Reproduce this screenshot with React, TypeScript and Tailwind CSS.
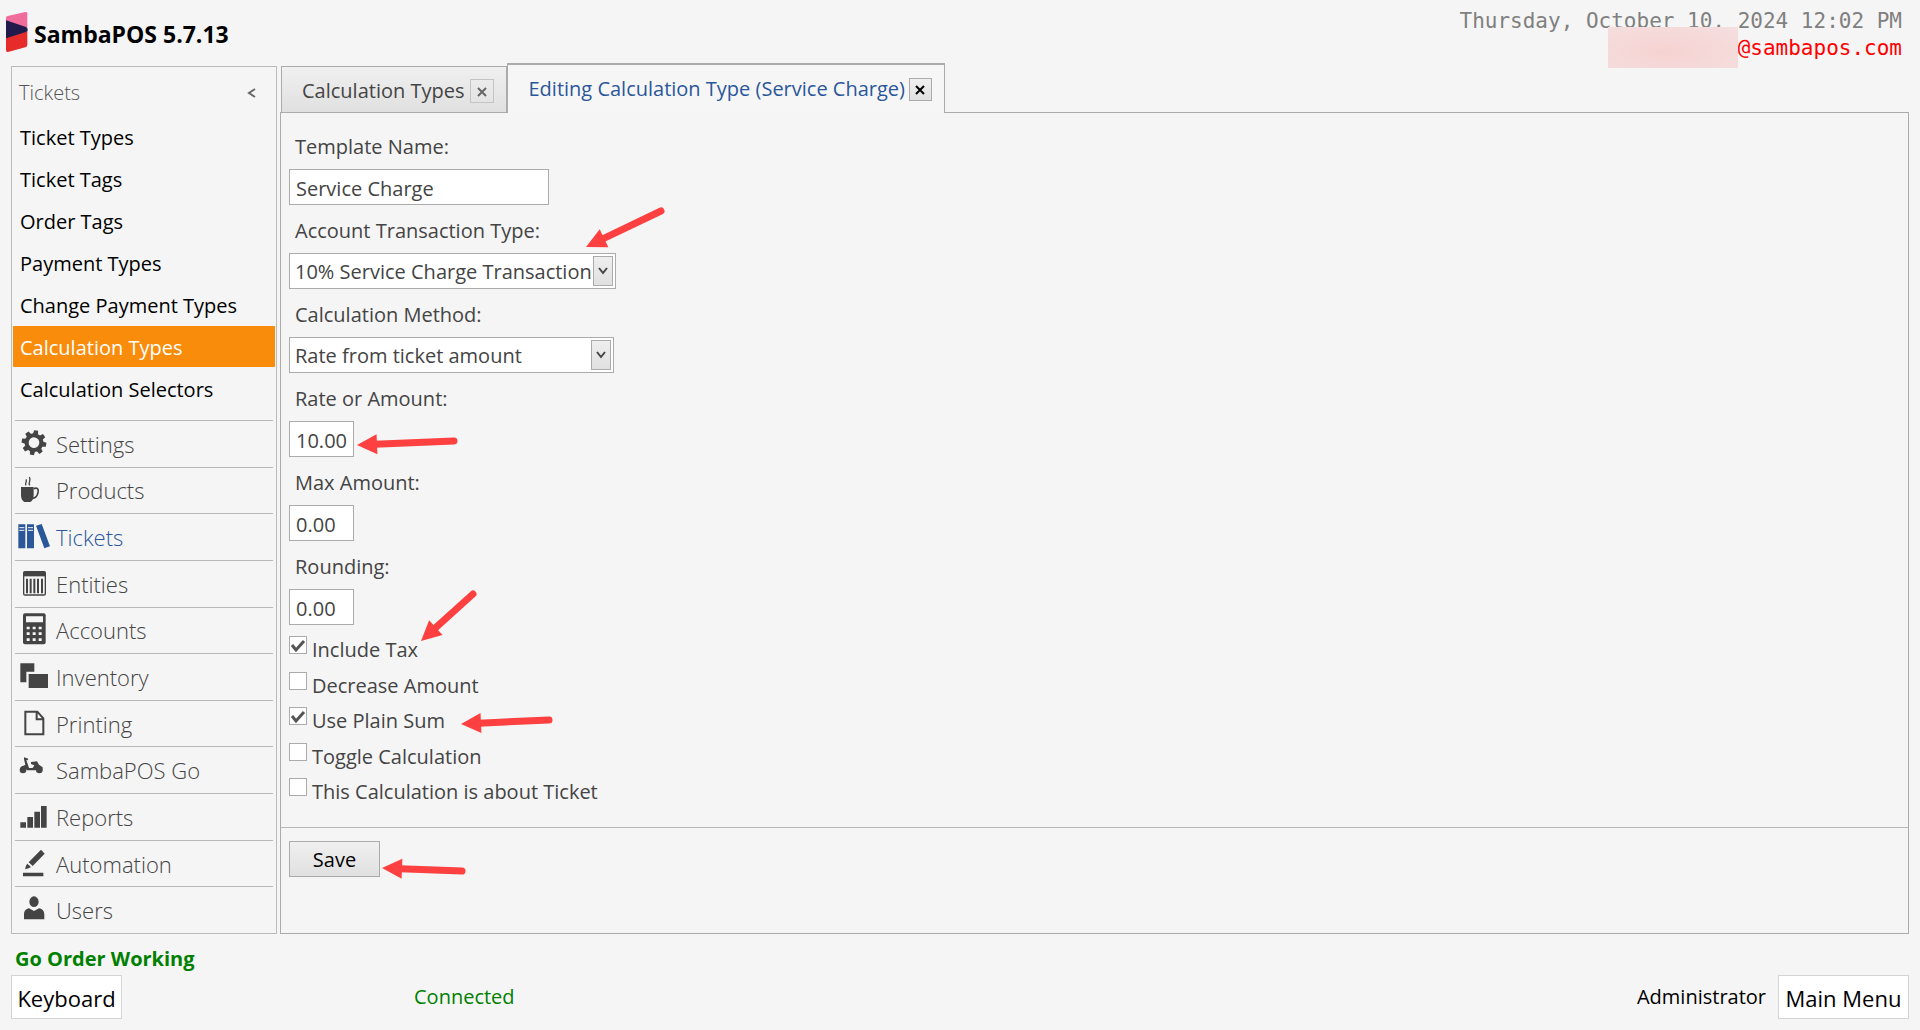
import { ReactNode } from 'react';

const ticketLinks = [
  'Ticket Types',
  'Ticket Tags',
  'Order Tags',
  'Payment Types',
  'Change Payment Types',
  'Calculation Types',
  'Calculation Selectors',
];

const gearTeeth = [0, 45, 90, 135, 180, 225, 270, 315];

const icons: Record<string, ReactNode> = {
  Settings: (
    <g transform="rotate(10 57 62)">
      <circle cx="57" cy="62" r="22" fill="none" stroke="currentColor" strokeWidth="12" />
      {gearTeeth.map((deg) => (
        <path key={deg} d="M49 38 L51 25 H63 L65 38 Z" transform={`rotate(${deg} 57 62)`} />
      ))}
    </g>
  ),
  Products: (
    <>
      <path d="M18 57 H56 V80 C56 92 52 98 46 102 H28 C21 97 18 91 18 80 Z" />
      <path d="M56 62 C66 57 72 63 69 74 C67 84 60 90 53 91" fill="none" stroke="currentColor" strokeWidth="5" />
      <path d="M33 52 C28 45 38 42 33 34 M44 52 C38 42 50 38 43 27" fill="none" stroke="currentColor" strokeWidth="4" />
    </>
  ),
  Tickets: (
    <>
      <path d="M10 28 H31 V100 H10 Z M36 28 H57 V100 H36 Z M63 32 L80 27 L105 94 L88 100 Z" />
      <path d="M13 38 H28 M13 46 H28 M39 38 H54 M39 46 H54" stroke="#f5f5f5" strokeWidth="3" />
    </>
  ),
  Entities: (
    <>
      <rect x="26" y="29" width="65" height="70" rx="4" fill="none" stroke="currentColor" strokeWidth="4" />
      <path d="M26 29 H91 V43 H26 Z" />
      <path d="M36 50 V94 M47 50 V94 M58 50 V94 M69 50 V94 M81 50 V94" stroke="currentColor" strokeWidth="6" />
    </>
  ),
  Accounts: (
    <>
      <rect x="24" y="16" width="68" height="93" rx="6" />
      <path
        d="M33 25 H84 V43 H33 Z M35 56 h9 v8 h-9 Z M53 56 h9 v8 h-9 Z M71 56 h9 v8 h-9 Z M35 73 h9 v8 h-9 Z M53 73 h9 v8 h-9 Z M71 73 h9 v8 h-9 Z M35 91 h9 v8 h-9 Z M53 91 h9 v8 h-9 Z M71 91 h9 v8 h-9 Z"
        fill="#f5f5f5"
      />
    </>
  ),
  Inventory: <path d="M16 25 H58 V50 H34 V82 H16 Z M41 57 H99 V99 H41 Z" />,
  Printing: (
    <path d="M31 29 H67 L85 49 V97 H31 Z M65 29 V52 H85" fill="none" stroke="currentColor" strokeWidth="6" />
  ),
  'SambaPOS Go': (
    <>
      <circle cx="24" cy="66" r="10" />
      <circle cx="73" cy="66" r="10" />
      <path d="M27 28 L40 32 L38 37 L34 36 L42 60 H53 L58 52 L48 48 V42 L66 40 L72 50 L83 58 L82 67 H36 L30 59 L15 66 C15 57 20 53 26 53 L31 50 L27 34 Z" />
    </>
  ),
  Reports: <path d="M16 82 h17 v16 h-17 Z M37 66 h17 v32 h-17 Z M58 50 h17 v48 h-17 Z M78 33 h17 v65 h-17 Z" />,
  Automation: <path d="M78 23 L89 35 L53 72 L41 61 Z M37 65 L48 75 L41 79 L30 82 L33 71 Z M24 92 H85 V103 H24 Z" />,
  Users: (
    <>
      <ellipse cx="57" cy="41" rx="14" ry="16" />
      <path d="M27 94 V80 C27 68 33 63 42 61 L57 69 L72 61 C82 63 88 68 88 80 V94 Z" />
    </>
  ),
};

const textFields = [
  { id: 'rate', label: 'Rate or Amount:', value: '10.00' },
  { id: 'max', label: 'Max Amount:', value: '0.00' },
  { id: 'rounding', label: 'Rounding:', value: '0.00' },
];

const options = [
  { id: 'tax', label: 'Include Tax', checked: true },
  { id: 'decrease', label: 'Decrease Amount', checked: false },
  { id: 'plain', label: 'Use Plain Sum', checked: true },
  { id: 'toggle', label: 'Toggle Calculation', checked: false },
  { id: 'about', label: 'This Calculation is about Ticket', checked: false },
];

// tip and tail of each callout arrow, in panel coordinates
const arrows = [
  { tip: [305, 134], tail: [380, 98] },
  { tip: [76, 332], tail: [173, 328] },
  { tip: [140, 528], tail: [192, 481] },
  { tip: [180, 611], tail: [268, 607] },
  { tip: [101, 755], tail: [181, 758] },
];

const Arrow = ({ tip, tail }: { tip: number[]; tail: number[] }) => {
  const dx = tail[0] - tip[0];
  const dy = tail[1] - tip[1];
  const angle = (Math.atan2(dy, dx) * 180) / Math.PI;
  return (
    <g transform={`translate(${tip[0]} ${tip[1]}) rotate(${angle})`}>
      <path d="M0 0 L20 -10 V10 Z" fill="#ff4040" />
      <path d={`M18 0 H${Math.hypot(dx, dy)}`} stroke="#ff4040" strokeWidth="7" strokeLinecap="round" />
    </g>
  );
};

const Cross = () => (
  <svg viewBox="0 0 10 10" className="mt-[2px] size-[10px]" fill="none" stroke="currentColor" strokeWidth="2">
    <path d="M1 1 L9 9 M9 1 L1 9" />
  </svg>
);

const Field = ({ id, label, children }: { id: string; label: string; children: ReactNode }) => (
  <div className="flex flex-col items-start">
    <label htmlFor={id} className="flex h-12 items-center pl-[6px] pt-1">
      {label}
    </label>
    {children}
  </div>
);

const Select = ({ id, value, width }: { id: string; value: string; width: string }) => (
  <div className={`relative ${width}`}>
    <select
      id={id}
      className="h-9 w-full appearance-none rounded-none border border-[#ababab] bg-white pl-[5px] pt-[2px] outline-none"
    >
      <option>{value}</option>
    </select>
    <span className="pointer-events-none absolute inset-y-[3px] right-[3px] flex w-5 items-center justify-center border border-[#ababab] bg-gradient-to-b from-[#eeeeee] to-[#e0e0e0]">
      <svg viewBox="0 0 10 8" className="h-2 w-[10px]" fill="none" stroke="#444444" strokeWidth="2">
        <path d="M1 1 L5 6 L9 1" />
      </svg>
    </span>
  </div>
);

const Sidebar = () => (
  <aside className="flex w-[266px] flex-none flex-col border border-[#bcbcbc]">
    <div className="flex h-[49px] items-center justify-between pl-[7px] pr-5 pt-[2px] text-[#555555]">
      <h2 className="font-light">Tickets</h2>
      <button aria-label="Collapse">
        <svg viewBox="0 0 9 10" className="h-[10px] w-[9px]" fill="none" stroke="#666666" strokeWidth="2">
          <path d="M8 1 L2 5 L8 9" />
        </svg>
      </button>
    </div>
    <ul className="flex flex-col gap-px px-px pb-[11px]">
      {ticketLinks.map((link) => (
        <li key={link}>
          <a
            href="#"
            className={`flex h-[41px] items-center pl-[7px] pt-[2px] ${
              link === 'Calculation Types' ? 'bg-[#f98c0a] text-white' : 'text-black'
            }`}
          >
            {link}
          </a>
        </li>
      ))}
    </ul>
    <nav className="flex flex-1 flex-col px-[3px]">
      {Object.entries(icons).map(([name, icon]) => (
        <a
          key={name}
          href="#"
          className={`flex flex-1 items-center gap-px border-t border-[#b8b8b8] text-[22px] leading-[44px] font-light ${
            name === 'Tickets' ? 'text-[#2b579a]' : 'text-[#444444]'
          }`}
        >
          <svg viewBox="0 0 120 132" className="h-11 w-10" fill="currentColor">
            {icon}
          </svg>
          {name}
        </a>
      ))}
    </nav>
  </aside>
);

const App = () => {
  return (
    <div className="flex min-h-screen flex-col bg-[#f5f5f5] px-[11px] pb-[11px] font-['Open_Sans','Noto_Sans',sans-serif] text-[20px] leading-[28px] text-[#444444]">
      <header className="-ml-[5px] flex h-[63px] justify-between">
        <div className="flex items-start gap-[6px] pt-3">
          <svg viewBox="0 0 66 120" className="h-10 w-[22px]">
            <path d="M0 16 Q1 13 5 12 L58 0 Q64 -1 64 5 V48 L0 28 Z" fill="#f06c9b" />
            <path d="M0 76 L64 58 V98 Q64 104 58 106 L6 120 Q0 121 0 114 Z" fill="#e62b2b" />
            <path d="M0 25 L60 45 Q66 48 65 54 Q66 58 60 60 L0 79 Z" fill="#211a4d" />
          </svg>
          <h1 className="pt-2 text-[23px] font-bold text-black">SambaPOS 5.7.13</h1>
        </div>
        <div className="flex flex-col items-end pr-[7px] pt-2 font-['DejaVu_Sans_Mono',monospace] text-[21px] leading-[27px]">
          <p className="text-[#808080]">Thursday, October 10, 2024 12:02 PM</p>
          <p className="relative text-[#ff0000]">
            <span className="absolute right-full -top-2 h-[41px] w-[130px] bg-[radial-gradient(ellipse_at_45%_60%,#f6d2d2,#f5dfdf)]" />
            @sambapos.com
          </p>
        </div>
      </header>

      <div className="flex flex-1 gap-[3px]">
        <div className="flex flex-none pt-[3px]">
          <Sidebar />
        </div>
        <main className="flex flex-1 flex-col">
          <div className="z-10 flex items-end pl-px" role="tablist">
            <div className="flex h-[46px] items-center gap-[6px] border border-b-0 border-[#ababab] bg-gradient-to-b from-[#f0f0f0] to-[#e0e0e0] pl-5 pr-3 pt-[2px]">
              <button role="tab">Calculation Types</button>
              <button aria-label="Close" className="flex size-6 items-center justify-center border border-[#c4c4c4] text-[#666666]">
                <Cross />
              </button>
            </div>
            <div className="-mb-px flex h-[50px] items-center gap-1 border border-t-2 border-b-0 border-[#ababab] bg-[#f6f6f6] pl-5 pr-3 text-[#2b579a]">
              <button role="tab" aria-selected="true">
                Editing Calculation Type (Service Charge)
              </button>
              <button
                aria-label="Close"
                className="flex size-[23px] items-center justify-center border border-[#ababab] bg-gradient-to-b from-[#f0f0f0] to-[#e0e0e0] text-black"
              >
                <Cross />
              </button>
            </div>
          </div>

          <form className="relative flex flex-1 flex-col border border-[#ababab]">
            <div className="flex flex-col px-2 pt-2 pb-[13px]">
              <Field id="name" label="Template Name:">
                <input
                  id="name"
                  defaultValue="Service Charge"
                  className="h-9 w-[260px] border border-[#ababab] bg-white px-[6px] pt-[2px] outline-none"
                />
              </Field>
              <Field id="transaction" label="Account Transaction Type:">
                <Select id="transaction" value="10% Service Charge Transaction" width="w-[327px]" />
              </Field>
              <Field id="method" label="Calculation Method:">
                <Select id="method" value="Rate from ticket amount" width="w-[325px]" />
              </Field>
              {textFields.map((field) => (
                <Field key={field.id} id={field.id} label={field.label}>
                  <input
                    id={field.id}
                    defaultValue={field.value}
                    className="h-9 w-[65px] border border-[#ababab] bg-white px-[6px] pt-[2px] outline-none"
                  />
                </Field>
              ))}
              <div className="mt-[11px] grid h-[178px] auto-rows-fr">
                {options.map((option) => (
                  <div key={option.id} className="flex items-start gap-[5px]">
                    <span className="relative size-[18px]">
                      <input
                        id={option.id}
                        type="checkbox"
                        defaultChecked={option.checked}
                        className="peer block size-[18px] appearance-none border border-[#ababab] bg-white"
                      />
                      <svg
                        viewBox="0 0 18 18"
                        className="pointer-events-none absolute inset-0 hidden size-[18px] peer-checked:block"
                        fill="none"
                        stroke="#555555"
                        strokeWidth="3"
                      >
                        <path d="M3 9 L7 14 L15 5" />
                      </svg>
                    </span>
                    <label htmlFor={option.id}>{option.label}</label>
                  </div>
                ))}
              </div>
            </div>
            <div className="border-t border-[#b8b8b8] px-2 pt-[13px]">
              <button
                type="button"
                className="h-9 w-[91px] border border-[#ababab] bg-gradient-to-b from-[#f0f0f0] to-[#e0e0e0] pt-[2px] text-black"
              >
                Save
              </button>
            </div>
            <svg className="pointer-events-none absolute inset-0 size-full">
              {arrows.map((arrow) => (
                <Arrow key={arrow.tip.join()} {...arrow} />
              ))}
            </svg>
          </form>
        </main>
      </div>

      <footer className="pt-[10px]">
        <p className="pl-1 leading-[30px] font-bold text-[#008000]">Go Order Working</p>
        <div className="flex items-center pt-px">
          <div className="w-[403px]">
            <button className="h-11 w-[111px] border border-[#d4d4d4] bg-white pt-[2px] text-[22px] text-black">Keyboard</button>
          </div>
          <p className="text-[#008000]">Connected</p>
          <p className="ml-auto pr-3 text-black">Administrator</p>
          <button className="h-11 w-[131px] border border-[#d4d4d4] bg-white pt-[2px] text-[22px] text-black">Main Menu</button>
        </div>
      </footer>
    </div>
  );
};

export default App;
